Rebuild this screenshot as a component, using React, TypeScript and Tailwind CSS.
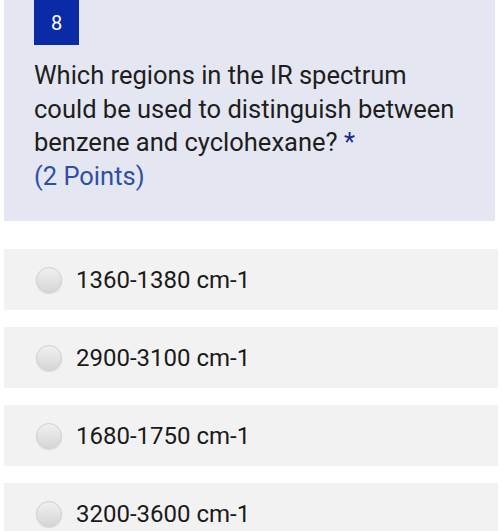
import React from "react";

const options = ["1360-1380 cm-1", "2900-3100 cm-1", "1680-1750 cm-1", "3200-3600 cm-1"];

export default function App() {
  return (
    <div
      className="w-[502px] h-[531px] overflow-hidden bg-white"
      style={{ fontFamily: "Roboto, 'Liberation Sans', sans-serif" }}
    >
      <div className="mx-[4px] w-[491px] h-[221px] bg-[#e4e7f1] pl-[30px]">
        <div className="w-[45px] h-[45px] bg-[#0b2aa6] flex items-center justify-center text-white text-[20px]">
          8
        </div>
        <div className="mt-[14px] text-[25.5px] leading-[33.5px] text-[#1e1e1e] whitespace-nowrap">
          <div>Which regions in the IR spectrum</div>
          <div>could be used to distinguish between</div>
          <div>
            benzene and cyclohexane? <span className="text-[#1a2a8a]">*</span>
          </div>
          <div className="text-[#2f4fa6]">(2 Points)</div>
        </div>
      </div>
      <div className="mt-[28px] flex flex-col gap-[17px]">
        {options.map((o) => (
          <div
            key={o}
            className="mx-[4px] w-[494px] h-[61px] bg-[#f2f2f2] flex items-center pl-[32px]"
          >
            <div className="w-[26px] h-[26px] rounded-full border border-[#cfcfcf] bg-gradient-to-b from-[#f0f0f0] to-[#d6d6d6] shadow-[0_1px_1px_rgba(0,0,0,0.12)]" />
            <span className="ml-[14px] text-[24px] text-[#1a1a1a]">{o}</span>
          </div>
        ))}
      </div>
    </div>
  );
}
